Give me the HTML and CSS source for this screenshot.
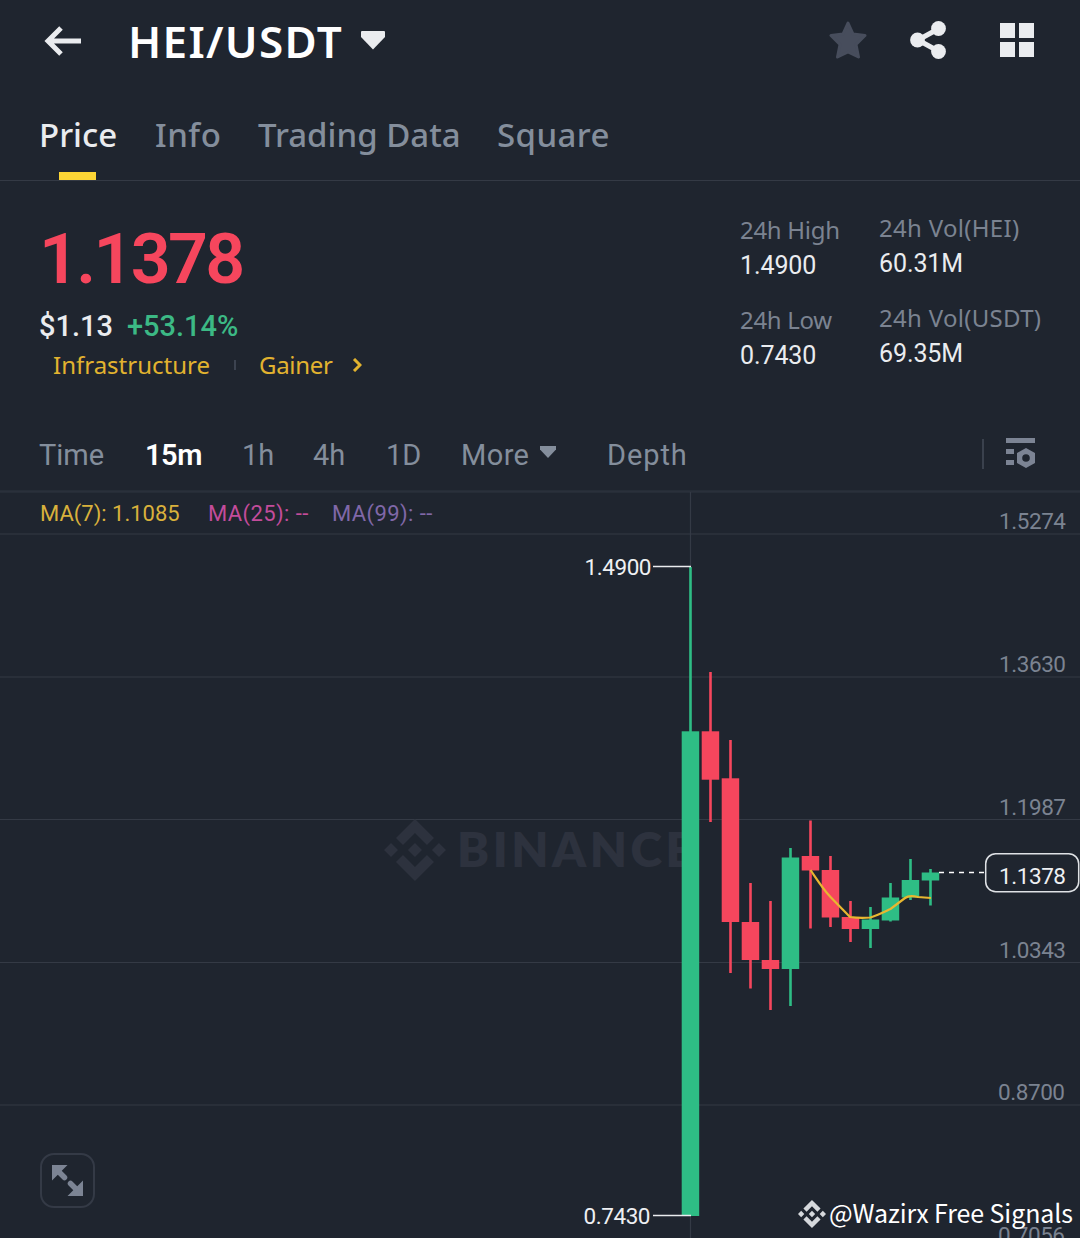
FILE: index.html
```
<!DOCTYPE html>
<html lang="en">

<head>
    <meta charset="UTF-8">
    <title>HEI/USDT</title>
    <link rel="stylesheet" href="styles.css">
</head>

<body>
    <header class="header">
        <svg class="back" width="38" height="30" viewBox="0 0 38 30">
            <path d="M17 2L4 15l13 13M4 15h33" fill="none" stroke="#eaecef" stroke-width="5" />
        </svg>
        <h1 class="pair">HEI/USDT</h1>
        <svg class="pair-caret" width="24" height="19" viewBox="0 0 24 19">
            <path d="M1 0h22q1 0 1 1v5L12 18.500 0 6V1q0-1 1-1z" fill="#eaecef" />
        </svg>
        <div class="header-icons">
            <svg width="38" height="38" viewBox="0 0 38 38">
                <path d="M19 2l5 11 12 1.500-9 9 2.500 12.500L19 31 8.500 36 11 23.500l-9-9L14 13z" fill="#474d5c" stroke="#474d5c" stroke-width="3" stroke-linejoin="round" />
            </svg>
            <svg width="36" height="38" viewBox="0 0 36 38">
                <path d="M29 7.500L8 19l21 11.500" fill="none" stroke="#eaecef" stroke-width="5" />
                <g fill="#eaecef">
                    <circle cx="7.500" cy="19" r="7.400" />
                    <circle cx="28.500" cy="7.500" r="7.400" />
                    <circle cx="28.500" cy="30.500" r="7.400" />
                </g>
            </svg>
            <svg width="34" height="34" viewBox="0 0 34 34">
                <path d="M0 0h15v15H0zM19 0h15v15H19zM0 19h15v15H0zM19 19h15v15H19z" fill="#eaecef" />
            </svg>
        </div>
    </header>

    <nav class="tabs">
        <a class="tab tab-price active">Price</a>
        <a class="tab tab-info">Info</a>
        <a class="tab tab-trading">Trading Data</a>
        <a class="tab tab-square">Square</a>
    </nav>

    <section class="ticker">
        <div class="ticker-left">
            <div class="last-price">1.1378</div>
            <div class="change-row">
                <span class="fiat">$1.13</span>
                <span class="change">+53.14%</span>
            </div>
            <div class="tags">
                <span class="tag-infra">Infrastructure</span>
                <span class="tag-divider"></span>
                <span class="tag-gainer">Gainer</span>
                <svg width="10" height="14" viewBox="0 0 10 14">
                    <path d="M2 1l6 6-6 6" fill="none" stroke="#e2b32f" stroke-width="3" />
                </svg>
            </div>
        </div>
        <div class="stats-col">
            <div class="stat"><span class="label">24h High</span><span class="value">1.4900</span></div>
            <div class="stat"><span class="label">24h Low</span><span class="value">0.7430</span></div>
        </div>
        <div class="stats-col stats-vol">
            <div class="stat"><span class="label">24h Vol(HEI)</span><span class="value">60.31M</span></div>
            <div class="stat"><span class="label">24h Vol(USDT)</span><span class="value">69.35M</span></div>
        </div>
    </section>

    <div class="intervals">
        <span class="iv-time">Time</span>
        <span class="iv-15m active">15m</span>
        <span class="iv-1h">1h</span>
        <span class="iv-4h">4h</span>
        <span class="iv-1d">1D</span>
        <span class="iv-more">More
            <svg width="16" height="12" viewBox="0 0 16 12">
                <path d="M0 0h16v3.500L8 12 0 3.500z" fill="#848e9c" />
            </svg>
        </span>
        <span class="iv-depth">Depth</span>
        <span class="iv-divider"></span>
        <svg class="iv-settings" width="30" height="31" viewBox="0 0 30 31">
            <g fill="#7c8494">
                <path d="M0 0h29v5H0zM0 11h8v5H0zM0 22h8v5H0z" />
                <path fill-rule="evenodd" d="M20 10l9 5v10l-9 5-9-5V15zM20 16.200a3.800 3.800 0 1 0 0 7.600 3.800 3.800 0 0 0 0-7.600z" />
            </g>
        </svg>
    </div>

    <main class="chart">
        <svg class="plot" width="1080" height="748" viewBox="0 490 1080 748">
            <defs>
                <symbol id="logo" viewBox="0 0 24 24">
                    <path d="M16.624 13.920l2.718 2.715-7.353 7.353-7.353-7.352 2.717-2.716 4.636 4.660 4.635-4.660zM21.260 9.284L24 12l-2.715 2.716L18.568 12zM11.988 9.285l2.717 2.691-2.717 2.717L9.272 12zM2.716 9.284L5.409 12l-2.692 2.692L0 12zM11.988.012l7.353 7.329-2.717 2.715-4.636-4.635-4.635 4.659-2.717-2.715z" />
                </symbol>
            </defs>

            <!-- grid -->
            <path class="top-line" d="M0 491.500H1080" />
            <path class="grid" d="M0 534H1080M0 677H1080M0 819.500H1080M0 962.500H1080M0 1105H1080M690.500 492V1238" />

            <g class="brand">
                <use href="#logo" x="384" y="819" width="62" height="62" />
                <text x="457" y="867" textLength="236">BINANCE</text>
            </g>

            <!-- candles -->
            <g class="up">
                <path class="wick" d="M690.500 567V1216M790.500 848V1006M870.500 907V948M890.500 883V921.500M910.500 859V900M930.500 869V905.500" />
                <rect x="681.700" y="731.300" width="17.500" height="484.700" />
                <rect x="781.700" y="857.500" width="17.500" height="111.500" />
                <rect x="861.700" y="919.500" width="17.500" height="9.500" />
                <rect x="881.700" y="897.500" width="17.500" height="23" />
                <rect x="901.700" y="880" width="17.500" height="17.500" />
                <rect x="921.700" y="872.500" width="17.500" height="8" />
            </g>
            <g class="down">
                <path class="wick" d="M710.500 672V822M730.500 740V973M750.500 883V988.500M770.500 901V1010M810.500 820.500V928.500M830.500 856V927M850.500 901V942" />
                <rect x="701.700" y="731.300" width="17.500" height="48.400" />
                <rect x="721.700" y="778.300" width="17.500" height="143.700" />
                <rect x="741.700" y="922" width="17.500" height="38" />
                <rect x="761.700" y="960" width="17.500" height="9" />
                <rect x="801.700" y="856" width="17.500" height="14.500" />
                <rect x="821.700" y="870" width="17.500" height="47.500" />
                <rect x="841.700" y="917" width="17.500" height="12" />
            </g>
            <path class="ma7" d="M810.500 870C818 881 823 889 830.500 897L850 917C857 918 864 918 870.500 917.500C878 915 884 912 890.500 909L905 898C909 895 914 896 918 897L931 898" />

            <!-- high / low marks -->
            <path class="mark-line" d="M653 566.500H691M653 1215.500H691" />
            <text class="mark" x="584.500" y="575" textLength="67">1.4900</text>
            <text class="mark" x="583.500" y="1224" textLength="67">0.7430</text>

            <!-- price axis -->
            <g class="axis">
                <text x="999" y="529" textLength="67">1.5274</text>
                <text x="999" y="672" textLength="67">1.3630</text>
                <text x="999" y="815" textLength="67">1.1987</text>
                <text x="999" y="958" textLength="67">1.0343</text>
                <text x="998" y="1100" textLength="67">0.8700</text>
                <text x="998" y="1243" textLength="67">0.7056</text>
            </g>
            <path class="last-line" d="M939 872.500H985" />
            <rect class="last-box" x="985.700" y="853.700" width="93" height="38" rx="10" />
            <text class="mark" x="999" y="884" textLength="67">1.1378</text>

            <g class="credit">
                <use href="#logo" x="798" y="1200" width="28" height="28" />
                <text x="829" y="1223" textLength="244">@Wazirx Free Signals</text>
            </g>
        </svg>
        <div class="ma-legend">
            <span class="ma-7">MA(7): 1.1085</span>
            <span class="ma-25">MA(25): --</span>
            <span class="ma-99">MA(99): --</span>
        </div>
        <div class="expand">
            <svg width="31" height="31" viewBox="0 0 31 31">
                <path d="M0 0h15.500L0 15.500zM31 31H15.500L31 15.500z" fill="#7c8494" />
                <path d="M6 6l6.500 6.500M25 25l-6.500-6.500" stroke="#7c8494" stroke-width="5.500" stroke-linecap="round" />
            </svg>
        </div>
    </main>
</body>

</html>
```
FILE: styles.css
```
* {
    box-sizing: border-box;
}

body {
    margin: 0;
    width: 1080px;
    height: 1238px;
    overflow: hidden;
    background-color: #1f252f;
    color: #eaecef;
    font-family: "Noto Sans", sans-serif;
    white-space: nowrap;
}

svg {
    display: block;
    flex: none;
}

/* header */
.header {
    display: flex;
    align-items: center;
    height: 81px;
    padding: 0 46px 0 44px;
}

.pair {
    width: 213px;
    margin: 0 20px 0 46px;
    font-size: 44px;
    font-weight: 600;
    line-height: 60px;
    letter-spacing: 1.3px;
    color: #fff;
}

.header-icons {
    display: flex;
    align-items: center;
    gap: 54px;
    margin: -1px 0 0 auto;
}

.header-icons svg:nth-child(2) {
    margin-left: -11px;
}

/* tabs */
.tabs {
    display: flex;
    height: 100px;
    padding: 31px 0 0 39px;
    border-bottom: 1px solid #343a45;
}

.tab {
    font-size: 33px;
    font-weight: 500;
    line-height: 46px;
    color: #848e9c;
}

.tab.active {
    position: relative;
    color: #eaecef;
}

.tab.active::after {
    content: "";
    position: absolute;
    left: 20px;
    bottom: 0;
    width: 37px;
    height: 8px;
    background-color: #fcd535;
}

.tab-price {
    width: 116px;
}

.tab-info {
    width: 103px;
    letter-spacing: 0.5px;
}

.tab-trading {
    width: 239px;
}

.tab-square {
    letter-spacing: 0.4px;
}

/* ticker */
.ticker {
    display: flex;
    height: 239px;
    padding: 31px 0 0 39px;
    font-family: Roboto, sans-serif;
}

.ticker-left {
    width: 701px;
}

.last-price {
    margin-top: 7px;
    font-size: 70px;
    font-weight: 600;
    line-height: 80px;
    letter-spacing: -2.7px;
    color: #f6465d;
}

.change-row {
    display: flex;
    gap: 14px;
    margin-top: 7px;
    font-size: 29px;
    font-weight: 500;
    line-height: 40px;
}

.change {
    color: #3cb985;
}

.tags {
    display: flex;
    align-items: center;
    padding-left: 14px;
    font-family: "Noto Sans", sans-serif;
    font-size: 24px;
    line-height: 38px;
    color: #e2b32f;
}

.tag-infra {
    width: 181px;
}

.tag-divider {
    width: 2px;
    height: 10px;
    margin-right: 23px;
    background-color: #3c4350;
}

.tag-gainer {
    width: 93px;
    letter-spacing: -0.3px;
}

.stats-col {
    width: 139px;
}

.stats-vol {
    width: 170px;
    margin-top: -2px;
}

.stat {
    display: flex;
    flex-direction: column;
    height: 90px;
}

.label {
    font-family: "Noto Sans", sans-serif;
    font-size: 24px;
    line-height: 35px;
    letter-spacing: -0.3px;
    color: #7b8391;
}

.stats-vol .label {
    letter-spacing: 0.3px;
}

.value {
    font-size: 25px;
    line-height: 37px;
    letter-spacing: -0.1px;
}

/* intervals */
.intervals {
    display: flex;
    align-items: center;
    height: 70px;
    padding-left: 39px;
    font-family: Roboto, sans-serif;
    font-size: 29px;
    line-height: 40px;
    color: #848e9c;
}

.intervals .active {
    font-weight: 600;
    letter-spacing: -0.5px;
    color: #fff;
}

.iv-time {
    width: 106px;
}

.iv-15m {
    width: 97px;
}

.iv-1h {
    width: 71px;
}

.iv-4h {
    width: 73px;
}

.iv-1d {
    width: 75px;
}

.iv-more {
    display: flex;
    align-items: center;
    justify-content: space-between;
    width: 95px;
    margin-right: 51px;
    letter-spacing: 0.4px;
}

.iv-more svg {
    margin-top: -6px;
}

.iv-depth {
    width: 375px;
    letter-spacing: 0.9px;
}

.iv-divider {
    width: 2px;
    height: 30px;
    margin: -3px 22px 0 0;
    background-color: #3a414d;
}

.iv-settings {
    margin-top: -3px;
}

/* chart */
.chart {
    position: relative;
    height: 748px;
    font-family: Roboto, sans-serif;
}

.top-line {
    stroke: #2a303b;
    stroke-width: 2.5;
}

.grid {
    fill: none;
    stroke: #343a45;
    stroke-width: 1.2;
}

.brand {
    fill: #2d323e;
    font-family: Lato, sans-serif;
    font-size: 48px;
    font-weight: 800;
}

.up {
    fill: #2ebd85;
    stroke: #2ebd85;
    stroke-width: 0;
}

.down {
    fill: #f6465d;
    stroke: #f6465d;
    stroke-width: 0;
}

.wick {
    stroke-width: 2.6;
}

.ma7 {
    fill: none;
    stroke: #e8b730;
    stroke-width: 2.2;
}

.mark-line {
    stroke: #eaecef;
    stroke-width: 1.5;
}

.mark,
.axis {
    font-size: 22.5px;
    fill: #eef0f3;
}

.axis {
    fill: #7b8391;
}

.last-line {
    stroke: #fff;
    stroke-width: 1.5;
    stroke-dasharray: 5 5;
}

.last-box {
    fill: #1f252f;
    stroke: #dfe2e6;
    stroke-width: 1.5;
}

.credit {
    fill: #fff;
    font-family: "Noto Sans CJK SC", sans-serif;
    font-size: 25px;
}

.credit use {
    fill: #d5d8dc;
}

.ma-legend {
    position: absolute;
    top: 11px;
    left: 40px;
    display: flex;
    font-size: 22px;
    line-height: 26px;
}

.ma-7 {
    width: 168px;
    color: #d9b13c;
}

.ma-25 {
    width: 124px;
    letter-spacing: 0.4px;
    color: #c34c9b;
}

.ma-99 {
    letter-spacing: 0.4px;
    color: #8068a8;
}

.expand {
    position: absolute;
    left: 40px;
    bottom: 30px;
    display: flex;
    align-items: center;
    justify-content: center;
    width: 55px;
    height: 55px;
    border: 2px solid #343a46;
    border-radius: 14px;
}
```
